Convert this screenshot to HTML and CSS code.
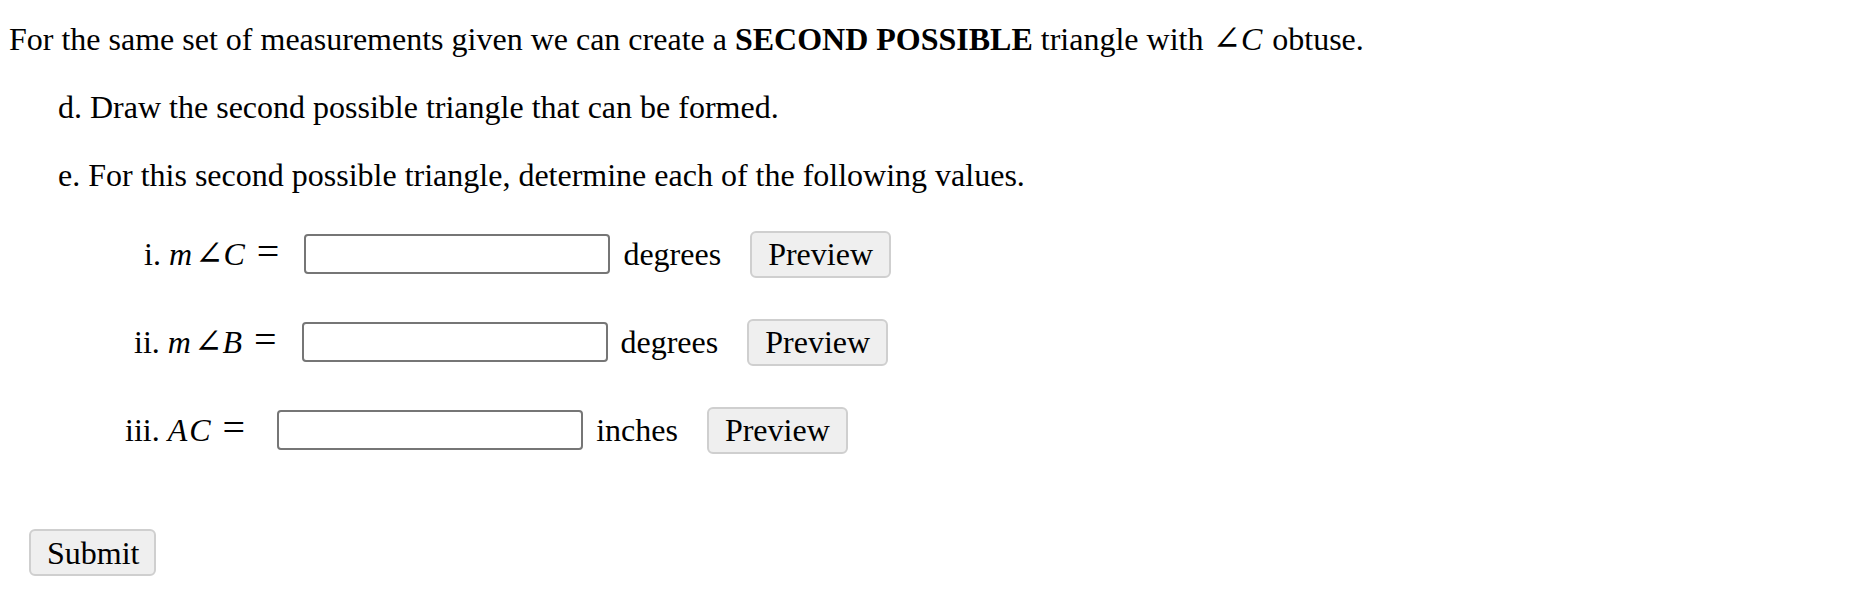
FILE: index.html
```html
<!DOCTYPE html>
<html>
<head>
<meta charset="utf-8">
<link rel="stylesheet" href="styles.css">
</head>
<body>
<form class="problem">
  <p class="intro">For the same set of measurements given we can create a <b>SECOND POSSIBLE</b> triangle with <span class="math"><span class="ang">∠</span><i>C</i></span> obtuse.</p>
  <p class="part">d. Draw the second possible triangle that can be formed.</p>
  <p class="part">e. For this second possible triangle, determine each of the following values.</p>

  <div class="row row-i">
    <span class="label">i. <span class="math"><i>m</i><span class="ang">∠</span><i>C</i><span class="eq">=</span></span></span>
    <input class="answer" type="text">
    <span class="unit">degrees</span>
    <button type="button" class="btn">Preview</button>
  </div>
  <div class="row row-ii">
    <span class="label">ii. <span class="math"><i>m</i><span class="ang">∠</span><i>B</i><span class="eq">=</span></span></span>
    <input class="answer" type="text">
    <span class="unit">degrees</span>
    <button type="button" class="btn">Preview</button>
  </div>
  <div class="row row-iii">
    <span class="label">iii. <span class="math"><i>AC</i><span class="eq">=</span></span></span>
    <input class="answer" type="text">
    <span class="unit">inches</span>
    <button type="button" class="btn">Preview</button>
  </div>

  <div class="submit-row">
    <button type="button" class="btn submit">Submit</button>
  </div>
</form>
</body>
</html>
```

FILE: styles.css
```css
html, body {
  margin: 0;
  padding: 0;
  background: #ffffff;
}
body {
  font-family: "Liberation Serif", "Times New Roman", serif;
  font-size: 32px;
  line-height: 36px;
  color: #000000;
}
.problem {
  padding: 21px 8px 0 9px;
}
p {
  margin: 0;
}
.intro {
  margin-bottom: 32px;
}
.part {
  margin-left: 49px;
  margin-bottom: 32px;
}
.part:last-of-type {
  margin-bottom: 38px;
}
.math {
  white-space: nowrap;
}
.math i {
  font-style: italic;
  letter-spacing: 2px;
}
.ang {
  font-family: "DejaVu Serif", "DejaVu Sans", serif;
  font-size: 34px;
  line-height: 0;
  margin: 0 0 0 1px;
}
.eq {
  font-size: 40px;
  line-height: 0;
  margin-left: 10px;
}
.row {
  display: flex;
  align-items: center;
  height: 46px;
  margin-bottom: 42px;
}
.row-i { padding-left: 135px; }
.row-ii { padding-left: 125px; }
.row-iii { padding-left: 116px; }
.label {
  margin-right: 25px;
}
.row-iii .label {
  margin-right: 32px;
}
.answer {
  box-sizing: border-box;
  width: 306px;
  height: 40px;
  border: 2px solid #767676;
  border-radius: 4px;
  background: #fff;
  margin: 0;
  padding: 0 6px;
  font: inherit;
}
.unit {
  margin-left: 13px;
  margin-right: 29px;
}
.btn {
  box-sizing: border-box;
  height: 47px;
  padding: 0 16px;
  font: inherit;
  font-size: 32px;
  line-height: 36px;
  color: #000;
  background: #efefef;
  border: 2px solid #cfcfcf;
  border-radius: 6px;
}
.submit-row {
  margin-top: 76px;
  padding-left: 20px;
}
.submit {
  width: 127px;
}
```
